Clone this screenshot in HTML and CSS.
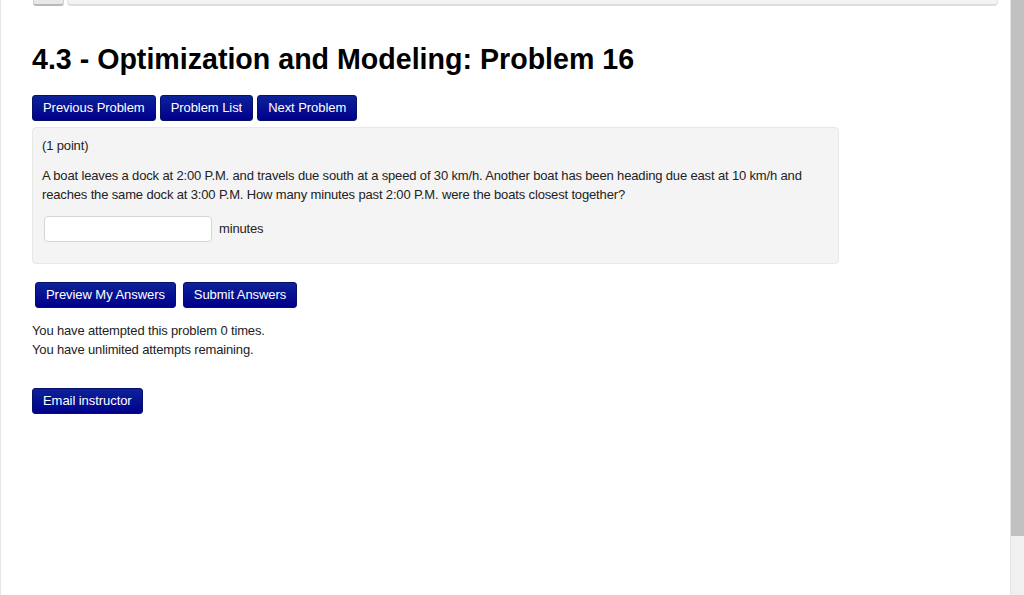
FILE: index.html
```html
<!DOCTYPE html>
<html>
  <head>
    <meta charset="utf-8">
    <title>4.3 - Optimization and Modeling: Problem 16</title>
    <link rel="stylesheet" href="styles.css">
  </head>
  <body>
    <div class="topbar">
      <div class="tab"></div>
      <div class="crumbs"></div>
    </div>
    <div class="page">
      <h1 class="title">4.3 - Optimization and Modeling: Problem 16</h1>

      <div class="nav">
        <a class="btn" href="#">Previous Problem</a>
        <a class="btn" href="#">Problem List</a>
        <a class="btn" href="#">Next Problem</a>
      </div>

      <div class="problem">
        <p class="points">(1 point)</p>
        <p class="text">A boat leaves a dock at 2:00 P.M. and travels due south at a speed of 30 km/h. Another boat has been heading due east at 10 km/h and reaches the same dock at 3:00 P.M. How many minutes past 2:00 P.M. were the boats closest together?</p>
        <div class="answer">
          <input class="ans" type="text">
          <span class="unit">minutes</span>
        </div>
      </div>

      <div class="submit">
        <a class="btn" href="#">Preview My Answers</a>
        <a class="btn" href="#">Submit Answers</a>
      </div>

      <div class="attempts">
        <p>You have attempted this problem 0 times.</p>
        <p>You have unlimited attempts remaining.</p>
      </div>

      <div class="email">
        <a class="btn" href="#">Email instructor</a>
      </div>
    </div>
    <div class="scrollbar"><div class="thumb"></div></div>
  </body>
</html>
```

FILE: styles.css
```css
  *{
    margin: 0;
    padding: 0;
    box-sizing: border-box;
  }
  html, body{
    height: 100%;
    overflow: hidden;
  }
  body{
    background: #fff;
    font-family: "Liberation Sans", Arial, sans-serif;
    font-size: 13px;
    letter-spacing: -0.15px;
    color: #222;
    border-left: 1px solid #e6e6e6;
    margin-right: 14px;
  }
  .topbar{
    display: flex;
    gap: 3px;
    height: 6px;
    padding-left: 32px;
    padding-right: 12px;
  }
  .tab{
    width: 31px;
    background: #e8e8e8;
    border: 1px solid #d0d0d0;
    border-top: none;
    border-bottom: 2px solid #b8b8b8;
    border-radius: 0 0 3px 3px;
  }
  .crumbs{
    flex: 1;
    background: #f3f3f3;
    border: 1px solid #e3e3e3;
    border-top: none;
    border-bottom: 2px solid #dedede;
    border-radius: 0 0 4px 4px;
  }
  .page{
    padding: 0 0 0 31px;
  }
  .title{
    font-size: 28.6px;
    letter-spacing: 0;
    font-weight: bold;
    color: #000;
    margin-top: 37px;
    line-height: 32px;
  }
  .nav{
    display: flex;
    gap: 4px;
    margin-top: 20px;
  }
  .btn{
    display: inline-block;
    height: 26px;
    line-height: 24px;
    padding: 0 10px;
    color: #fff;
    text-decoration: none;
    font-size: 13px;
    letter-spacing: -0.06px;
    background: linear-gradient(#0d2299, #00008b);
    border: 1px solid #06106a;
    border-radius: 3px;
  }
  .problem{
    width: 807px;
    margin-top: 6px;
    background: #f4f4f4;
    border: 1px solid #e8e8e8;
    border-radius: 4px;
    padding: 8px 9px 21px 9px;
    color: #222;
  }
  .points{
    line-height: 19px;
  }
  .text{
    margin-top: 11px;
    line-height: 19px;
    padding-right: 20px;
  }
  .answer{
    display: flex;
    align-items: center;
    gap: 7px;
    margin-top: 12px;
    margin-left: 2px;
  }
  .unit{
    margin-top: -2px;
  }
  .ans{
    width: 168px;
    height: 26px;
    border: 1px solid #d6d6d6;
    border-radius: 4px;
    background: #fff;
  }
  .submit{
    display: flex;
    gap: 7px;
    margin-top: 18px;
    padding-left: 3px;
  }
  .attempts{
    margin-top: 13px;
    line-height: 19px;
  }
  .email{
    margin-top: 29px;
  }
  .scrollbar{
    position: fixed;
    top: 0;
    right: 0;
    width: 14px;
    height: 100%;
    background: #f0f0f0;
    border-left: 1px solid #e4e4e4;
  }
  .thumb{
    height: 536px;
    background: #c1c1c1;
  }
```
